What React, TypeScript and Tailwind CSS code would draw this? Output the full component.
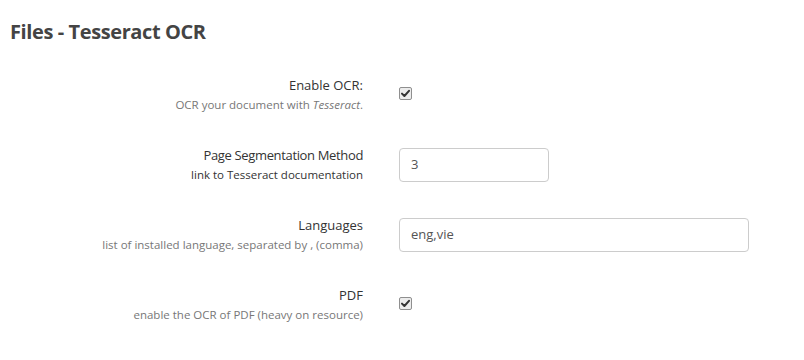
import React from "react";

function Check() {
  return (
    <span className="mt-[11px] flex h-[13px] w-[13px] items-center justify-center rounded-[2px] border border-[#8f8f8f] bg-[#ececec]">
      <svg width="9" height="9" viewBox="0 0 9 9">
        <path d="M1 4.6 L3.4 7 L8 1.8" fill="none" stroke="#333" strokeWidth="2" strokeLinecap="round" strokeLinejoin="round" />
      </svg>
    </span>
  );
}

function Row({ label, sub, children, tight, dark }: { label: React.ReactNode; sub: React.ReactNode; children: React.ReactNode; tight?: boolean; dark?: boolean }) {
  return (
    <div className="flex h-[70px] items-start">
      <div className="w-[364px] pr-[1px] text-right">
        <div className={`text-[13px] leading-[18px] text-[#333] ${tight ? "tracking-[-0.35px]" : ""}`}>{label}</div>
        <div className={`mt-[3px] text-[11.5px] leading-[16px] ${dark ? "text-[#333]" : "text-[#777]"}`}>{sub}</div>
      </div>
      <div className="ml-[35px]">{children}</div>
    </div>
  );
}

function Field({ value, w }: { value: string; w: string }) {
  return (
    <div className={`mt-[2px] flex h-[34px] items-center rounded-[4px] border border-[#ccc] bg-white px-[11px] text-[13px] text-[#555] ${w}`}>
      {value}
    </div>
  );
}

export default function App() {
  return (
    <div className="h-[360px] w-[804px] bg-white font-['Open_Sans',sans-serif]">
      <h1 className="px-[10px] pt-[19px] text-[20px] font-bold leading-[26px] tracking-[-0.4px] text-[#444]">Files - Tesseract OCR</h1>
      <div className="mt-[31px]">
        <Row label="Enable OCR:" sub={<>OCR your document with <i>Tesseract</i>.</>}>
          <Check />
        </Row>
        <Row tight dark label="Page Segmentation Method " sub="link to Tesseract documentation">
          <Field value="3" w="w-[150px]" />
        </Row>
        <Row label="Languages " sub="list of installed language, separated by , (comma)">
          <Field value="eng,vie" w="w-[350px]" />
        </Row>
        <Row label="PDF " sub="enable the OCR of PDF (heavy on resource)">
          <Check />
        </Row>
      </div>
    </div>
  );
}
